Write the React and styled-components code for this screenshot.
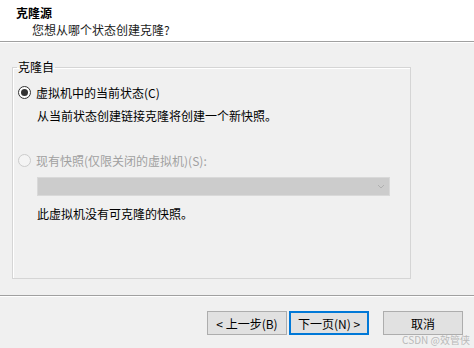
import styled, { createGlobalStyle } from "styled-components";

const Global = createGlobalStyle`
  html, body { margin: 0; padding: 0; }
  body {
    width: 474px;
    height: 348px;
    overflow: hidden;
    background: #f0f0f0;
    font-family: "Noto Sans CJK SC", "Noto Sans", sans-serif;
    font-size: 12px;
    color: #000;
  }
`;

const Window = styled.div`
  position: relative;
  width: 474px;
  height: 348px;
  display: flex;
  flex-direction: column;
  background: #f0f0f0;
`;

const Header = styled.div`
  height: 42px;
  background: #fff;
  box-sizing: border-box;
  padding: 5px 0 0 16px;
  border-bottom: 1px solid #a0a0a0;
`;

const Title = styled.div`
  font-weight: bold;
  line-height: 16px;
`;

const Subtitle = styled.div`
  padding-left: 16px;
  margin-top: 1px;
  line-height: 16px;
  color: #1a1a1a;
`;

const Body = styled.div`
  flex: 1;
  display: flex;
  padding: 17px 0 0 12px;
  border-top: 1px solid #fff;
`;

const Group = styled.fieldset`
  margin: 0;
  width: 399px;
  height: 219px;
  box-sizing: border-box;
  border: 1px solid #d5d5d5;
  box-shadow: inset 1px 1px 0 #fff;
  padding: 3px 0 0 5px;
`;

const Legend = styled.legend`
  padding: 0 1px;
  margin-left: -1px;
  line-height: 14px;
`;

const Option = styled.label`
  display: flex;
  align-items: center;
  gap: 5px;
  height: 18px;
  color: ${(p) => (p.disabled ? "#a0a0a0" : "#000")};
  margin-top: ${(p) => p.top || 0}px;
`;

const Radio = styled.span`
  width: 11px;
  height: 11px;
  border-radius: 50%;
  border: 1px solid ${(p) => (p.disabled ? "#cccccc" : "#333")};
  background: ${(p) => (p.disabled ? "#f4f4f4" : "#fff")};
  display: flex;
  align-items: center;
  justify-content: center;
  &::after {
    content: "";
    width: 7px;
    height: 7px;
    border-radius: 50%;
    background: ${(p) => (p.checked ? "#333" : "transparent")};
  }
`;

const Note = styled.div`
  padding-left: 19px;
  margin-top: ${(p) => p.top || 0}px;
  line-height: 18px;
`;

const Combo = styled.div`
  margin: 8px 0 0 19px;
  width: 353px;
  height: 19px;
  box-sizing: border-box;
  background: #cccccc;
  border: 1px solid #d9d9d9;
  display: flex;
  align-items: center;
  justify-content: flex-end;
  padding-right: 4px;
`;

const Divider = styled.div`
  height: 0;
  border-top: 1px solid #a0a0a0;
  border-bottom: 1px solid #fff;
`;

const Footer = styled.div`
  height: 51px;
  display: flex;
  align-items: flex-start;
  padding: 14px 0 0 207px;
  box-sizing: border-box;
`;

const Button = styled.button`
  width: 80px;
  height: 24px;
  margin-right: ${(p) => p.gap || 0}px;
  padding: 0;
  background: #e1e1e1;
  border: 1px solid ${(p) => (p.primary ? "#0078d7" : "#adadad")};
  box-shadow: ${(p) => (p.primary ? "inset 0 0 0 1px #0078d7" : "none")};
  font-family: inherit;
  font-size: 12px;
  color: #000;
`;

const Watermark = styled.div`
  position: absolute;
  right: 4px;
  bottom: 1px;
  font-size: 10px;
  color: rgba(170, 170, 170, 0.8);
  font-family: "Noto Sans CJK SC", sans-serif;
`;

const App = () => {
  return (
    <Window>
      <Global />
      <Header>
        <Title>克隆源</Title>
        <Subtitle>您想从哪个状态创建克隆?</Subtitle>
      </Header>
      <Body>
        <Group>
          <Legend>克隆自</Legend>
          <Option top={6}>
            <Radio checked />
            虚拟机中的当前状态(C)
          </Option>
          <Note top={6}>从当前状态创建链接克隆将创建一个新快照。</Note>
          <Option top={26} disabled>
            <Radio disabled />
            现有快照(仅限关闭的虚拟机)(S):
          </Option>
          <Combo>
            <svg width="8" height="5" viewBox="0 0 8 5">
              <path d="M1 1l3 3 3-3" stroke="#b0b0b0" fill="none" />
            </svg>
          </Combo>
          <Note top={9}>此虚拟机没有可克隆的快照。</Note>
        </Group>
      </Body>
      <Divider />
      <Footer>
        <Button gap={2}>&lt; 上一步(B)</Button>
        <Button primary gap={14}>下一页(N) &gt;</Button>
        <Button>取消</Button>
      </Footer>
      <Watermark>CSDN @效管侠</Watermark>
    </Window>
  );
};

export default App;
